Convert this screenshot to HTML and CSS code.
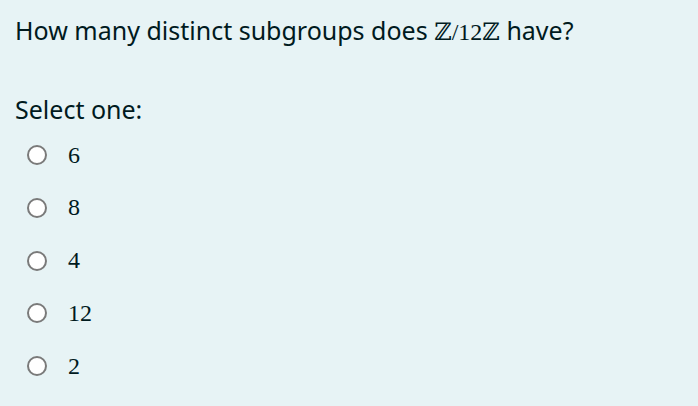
FILE: index.html
```html
<!DOCTYPE html>
<html lang="en">
<head>
    <meta charset="UTF-8">
    <meta name="viewport" content="width=device-width, initial-scale=1.0">
    <title>Question</title>
    <link rel="stylesheet" href="styles.css">
</head>
<body>
    <div class="formulation">
        <div class="qtext">
            How many distinct subgroups does <span class="math">ℤ/12ℤ</span> have?
        </div>

        <div class="ablock">
            <div class="prompt">Select one:</div>
            <div class="answer">
                <label class="option"><input type="radio" name="q1"><span class="math">6</span></label>
                <label class="option"><input type="radio" name="q1"><span class="math">8</span></label>
                <label class="option"><input type="radio" name="q1"><span class="math">4</span></label>
                <label class="option"><input type="radio" name="q1"><span class="math">12</span></label>
                <label class="option"><input type="radio" name="q1"><span class="math">2</span></label>
            </div>
        </div>
    </div>
</body>
</html>
```

FILE: styles.css
```css
html, body {
    margin: 0;
    height: 100%;
}
body {
    background-color: #e7f3f5;
    color: #001a1e;
    font-family: 'Noto Sans', 'Open Sans', sans-serif;
}
.formulation {
    padding: 14px 15px;
}
.qtext {
    font-size: 25px;
    line-height: 32px;
    margin-bottom: 45px;
}
.math {
    font-family: 'Liberation Serif', 'DejaVu Serif', serif;
    font-size: 24px;
}
.prompt {
    font-size: 25px;
    line-height: 32px;
    margin-bottom: 14px;
}
.answer {
    display: flex;
    flex-direction: column;
    gap: 20.75px;
    padding-left: 12px;
}
.option {
    display: flex;
    align-items: center;
    height: 32px;
    font-size: 24px;
}
.option input {
    appearance: none;
    width: 20px;
    height: 20px;
    margin: 0 21px 0 0;
    border: 2px solid #7a7a7a;
    border-radius: 50%;
    background: #fff;
    box-sizing: border-box;
}
```
